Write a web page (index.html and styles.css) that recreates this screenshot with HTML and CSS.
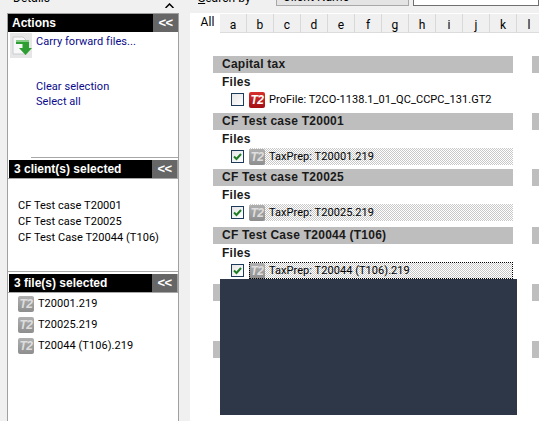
FILE: index.html
```html
<!DOCTYPE html>
<html lang="en">
<head>
<meta charset="utf-8">
<title>Carry forward</title>
<link rel="stylesheet" href="styles.css">
</head>
<body>
<div class="page">
  <aside class="side">
    <div class="side-top"><span class="side-title">Details</span>
      <svg class="side-close" width="9" height="5" viewBox="0 0 9 5"><path d="M0.5 5 L4.5 1 L8.5 5" fill="none" stroke="#000" stroke-width="1.5"/></svg>
    </div>
    <div class="panel">
      <section class="sec sec-actions">
        <header class="bar bar-first"><span>Actions</span><b class="chev">&lt;&lt;</b></header>
        <div class="action-first">
          <svg class="carry" width="22" height="25" viewBox="0 0 22 25">
            <rect width="22" height="25" fill="#e6e6e6"/>
            <path d="M3 4 H13 L17 8 V21 H3 Z" fill="#f8f8f8" stroke="#c8ccd0"/>
            <path d="M6 7 H19 V15 H22 L15.5 22 L9 15 H12.5 V11 H6 Z" fill="#2f9e32"/>
            <path d="M6 7 H19 V9 H6 Z" fill="#86cc86"/>
          </svg>
          <a class="link">Carry forward files...</a>
        </div>
        <div class="action-rest">
          <a class="link">Clear selection</a>
          <a class="link">Select all</a>
        </div>
      </section>
      <section class="sec sec-clients">
        <header class="bar bar-inset"><span>3 client(s) selected</span><b class="chev">&lt;&lt;</b></header>
        <ul class="clients">
          <li>CF Test case T20001</li>
          <li>CF Test case T20025</li>
          <li>CF Test Case T20044 (T106)</li>
        </ul>
      </section>
      <section class="sec sec-files">
        <header class="bar bar-inset"><span>3 file(s) selected</span><b class="chev">&lt;&lt;</b></header>
        <ul class="files">
          <li><i class="t2 t2-gray">T2</i>T20001.219</li>
          <li><i class="t2 t2-gray">T2</i>T20025.219</li>
          <li><i class="t2 t2-gray">T2</i>T20044 (T106).219</li>
        </ul>
      </section>
    </div>
  </aside>
  <main class="main">
    <div class="search">
      <span class="search-label"><u>S</u>earch by</span>
      <span class="search-select">Client Name</span>
      <span class="search-input"></span>
    </div>
    <nav class="tabs">
      <span class="tab tab-on">All</span><span class="tab">a</span><span class="tab">b</span><span class="tab">c</span><span class="tab">d</span><span class="tab">e</span><span class="tab">f</span><span class="tab">g</span><span class="tab">h</span><span class="tab">i</span><span class="tab">j</span><span class="tab">k</span><span class="tab tab-end">l</span>
    </nav>
    <div class="groups">
      <div class="group g1">
        <h2 class="g-title">Capital tax</h2>
        <h3 class="g-sub">Files</h3>
        <div class="row">
          <span class="check"></span>
          <span class="item"><i class="t2 t2-red">T2</i><span class="fname">ProFile: T2CO-1138.1_01_QC_CCPC_131.GT2</span></span>
        </div>
      </div>
      <div class="stub"></div>
      <div class="group g2">
        <h2 class="g-title">CF Test case T20001</h2>
        <h3 class="g-sub">Files</h3>
        <div class="row">
          <span class="check"><svg width="11" height="11" viewBox="0 0 11 11"><path d="M2 5.5 L4.5 8 L9 3" fill="none" stroke="#1f7d25" stroke-width="2"/></svg></span>
          <span class="item sel"><i class="t2 t2-gray">T2</i><span class="fname">TaxPrep: T20001.219</span></span>
        </div>
      </div>
      <div class="stub"></div>
      <div class="group g3">
        <h2 class="g-title">CF Test case T20025</h2>
        <h3 class="g-sub">Files</h3>
        <div class="row">
          <span class="check"><svg width="11" height="11" viewBox="0 0 11 11"><path d="M2 5.5 L4.5 8 L9 3" fill="none" stroke="#1f7d25" stroke-width="2"/></svg></span>
          <span class="item sel"><i class="t2 t2-gray">T2</i><span class="fname">TaxPrep: T20025.219</span></span>
        </div>
      </div>
      <div class="stub"></div>
      <div class="group g4">
        <h2 class="g-title">CF Test Case T20044 (T106)</h2>
        <h3 class="g-sub">Files</h3>
        <div class="row">
          <span class="check"><svg width="11" height="11" viewBox="0 0 11 11"><path d="M2 5.5 L4.5 8 L9 3" fill="none" stroke="#1f7d25" stroke-width="2"/></svg></span>
          <span class="item sel sel-focus"><i class="t2 t2-gray">T2</i><span class="fname">TaxPrep: T20044 (T106).219</span></span>
        </div>
      </div>
      <div class="stub"></div>
      <div class="group g5"><div class="g-title"></div></div>
      <div class="stub"></div>
      <div class="group g6"><div class="g-title"></div></div>
      <div class="stub"></div>
    </div>
    <div class="cover"></div>
  </main>
</div>
</body>
</html>
```

FILE: styles.css
```css
* { box-sizing: border-box; }
html, body { margin: 0; padding: 0; }
body { width: 539px; height: 421px; overflow: hidden; background: #f0f0f0; font-family: Roboto, "Liberation Sans", Arial, sans-serif; font-size: 11px; letter-spacing: 0.05px; color: #000; }
ul { list-style: none; margin: 0; padding: 0; }
h2, h3 { margin: 0; }
.page { display: flex; height: 421px; }

.side { width: 190px; flex: none; padding-left: 7px; padding-right: 11px; display: flex; flex-direction: column; }
.side-top { height: 13px; flex: none; display: flex; justify-content: space-between; align-items: flex-start; overflow: hidden; padding: 0 5px 0 6px; }
.side-title { font-size: 12px; line-height: 12px; margin-top: -8px; }
.side-close { margin-top: 3px; }
.panel { flex: 1; background: #fff; border: 1px solid #a0a0a0; border-bottom: 0; display: flex; flex-direction: column; }

.bar { height: 18px; background: #000; color: #fff; display: flex; justify-content: space-between; align-items: center; font: bold 12px "Liberation Sans", sans-serif; letter-spacing: 0; padding-left: 5px; flex: none; }
.bar-first { padding-left: 4px; }
.bar-inset { margin: 0 0 0 1px; border-right: 1px solid #a0a0a0; }
.chev { width: 25px; height: 18px; background: #666; color: #fff; font: bold 13px/17px "Liberation Sans", sans-serif; text-align: center; letter-spacing: -0.5px; flex: none; }

.sec-actions { height: 144px; border-bottom: 1px solid #a8a8a8; border-image: linear-gradient(to right, #fff 24px, #a8a8a8 24px) 1; }
.action-first { display: flex; height: 26px; padding: 1px 0 0 2px; }
.carry { flex: none; }
.action-first .link { margin-left: 4px; margin-top: 1px; }
.action-rest { padding: 21px 0 0 28px; display: flex; flex-direction: column; }
.link { color: #0a0a8c; line-height: 15px; display: block; }

.sec-clients { height: 114px; padding-top: 2px; border-bottom: 1px solid #a8a8a8; }
.clients { border-top: 1px solid #a8a8a8; padding: 19px 0 0 10px; }
.clients li { line-height: 16px; }

.sec-files { padding-top: 2px; flex: 1; }
.files { border-top: 1px solid #a8a8a8; padding: 0 0 0 10px; }
.files li { display: flex; align-items: center; height: 21px; gap: 4px; }

.t2 { width: 16px; height: 16px; flex: none; display: inline-flex; align-items: center; justify-content: center; font: italic bold 12px/16px "Liberation Sans", sans-serif; border-radius: 2px; letter-spacing: -0.5px; }
.t2-gray { background: linear-gradient(#b0b0b0, #8e8e8e); color: #dedede; }
.t2-red { background: linear-gradient(#d8302c, #a30f12); color: #fff; }

.main { flex: 1; position: relative; background: #fff; overflow: hidden; min-width: 0; }
.search { height: 14px; background: #f0f0f0; border-bottom: 1px solid #a0a0a0; display: flex; align-items: flex-start; padding: 0 0 0 8px; overflow: hidden; font-size: 12px; }
.search-label { width: 78px; line-height: 12px; margin-top: -8px; flex: none; }
.search-select { width: 133px; height: 19px; margin-top: -13px; background: #e4e4e4; border: 1px solid #a8a8a8; flex: none; padding-left: 6px; line-height: 19px; }
.search-input { flex: 1; margin-left: 4px; height: 19px; margin-top: -13px; background: #fff; border: 1px solid #707070; }

.tabs { display: flex; height: 20px; padding-left: 5px; margin-top: -1px; background: #fff; }
.tab { width: 27px; height: 19px; margin-top: 1px; background: #f0f0f0; border-right: 1px solid #d8d8d8; border-bottom: 1px solid #dcdcdc; text-align: center; line-height: 22px; font-size: 12px; flex: none; }
.tab-on { width: 25px; height: 20px; margin-top: 0; background: #fff; border-right: 0; border-bottom: 0; line-height: 18px; }
.tab-end { border-right: 0; width: 24px; }

.groups { display: grid; grid-template-columns: 300px 100px; column-gap: 19px; padding: 23px 0 0 23px; }
.group { min-width: 0; }
.stub { height: 17px; background: #bebebe; }
.g1 { height: 57px; }
.g2 { height: 56px; }
.g3 { height: 58px; }
.g4 { height: 57px; }
.g5 { height: 57px; }
.g-title { height: 17px; background: #bebebe; font: bold 12px/17px "Liberation Sans", sans-serif; letter-spacing: 0.25px; color: #1a1a1a; padding-left: 9px; }
.g-sub { font: bold 12px/15px "Liberation Sans", sans-serif; letter-spacing: 0.25px; color: #1a1a1a; padding-left: 9px; margin-top: 2px; height: 16px; }
.row { display: flex; align-items: center; height: 17px; padding-left: 18px; gap: 5px; white-space: nowrap; }
.check { width: 13px; height: 13px; border: 1px solid #1c3a5a; background: linear-gradient(135deg, #e6e6e6, #fff); flex: none; display: flex; align-items: center; justify-content: center; }
.item { display: flex; flex: 1; align-items: center; height: 17px; gap: 4px; }
.fname { line-height: 17px; }
.sel { background-image: conic-gradient(#c8c8c8 25%, #fff 0 50%, #c8c8c8 0 75%, #fff 0); background-size: 2px 2px; }
.sel-focus { outline: 1px dotted #000; outline-offset: -1px; }

.cover { position: absolute; left: 30px; top: 279px; width: 297px; height: 136px; background: #2d3748; }
```
